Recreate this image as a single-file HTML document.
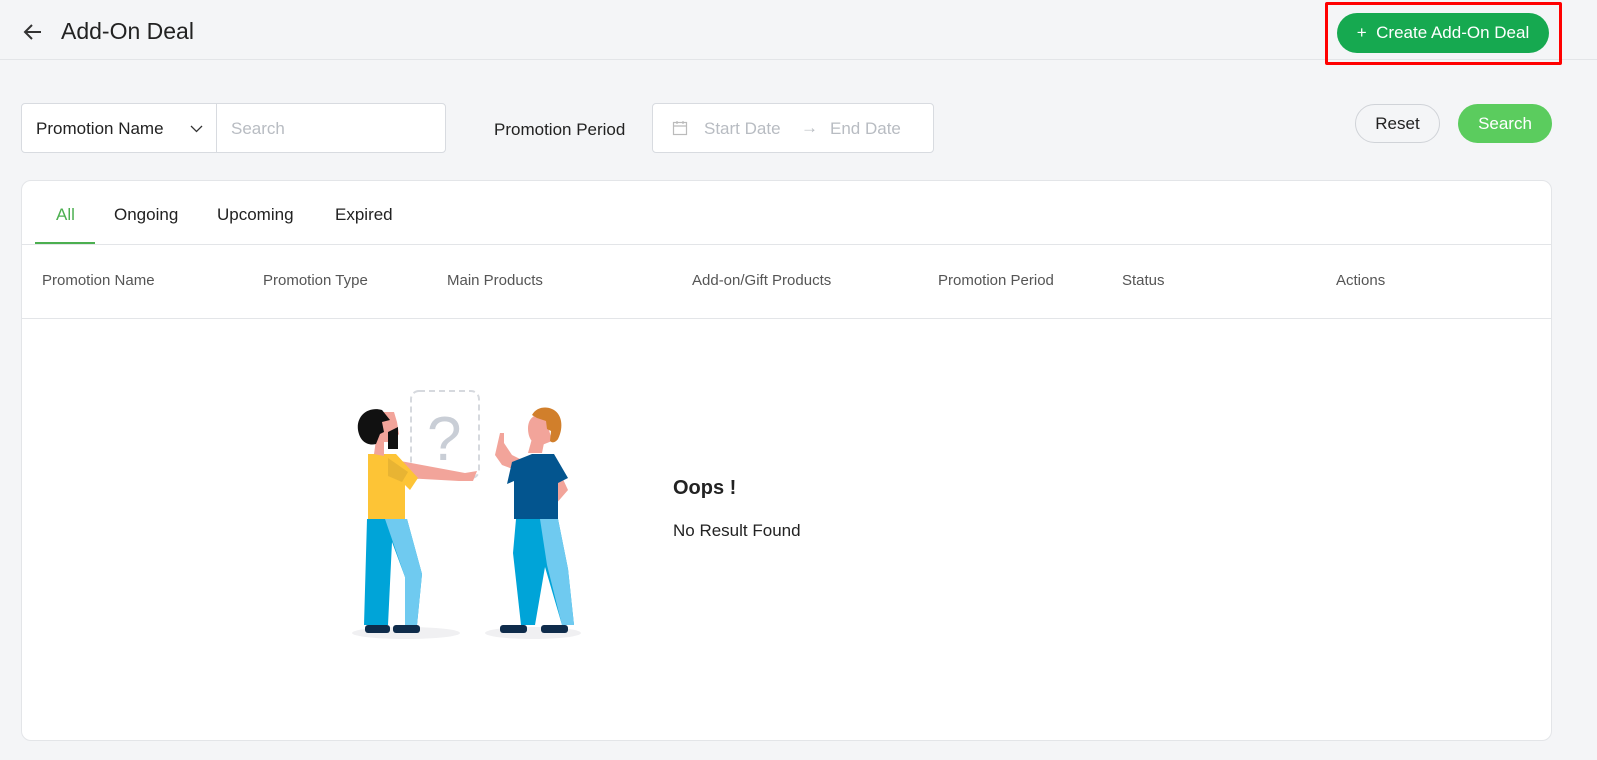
<!DOCTYPE html>
<html><head><meta charset="utf-8"><style>
*{box-sizing:border-box;margin:0;padding:0}
body{width:1597px;height:760px;background:#f4f5f7;font-family:"Liberation Sans",Arial,sans-serif;color:#222;position:relative;overflow:hidden}
.abs{position:absolute}
.hdr{left:0;top:0;width:1597px;height:60px;border-bottom:1px solid #e3e5e8}
.title{left:61px;top:18px;font-size:23px;color:#222}
.create{left:1337px;top:13px;width:212px;height:40px;border-radius:20px;background:#16a950;color:#fff;font-size:17px;line-height:40px;text-align:center}
.redbox{left:1325px;top:2px;width:237px;height:63px;border:3px solid #f00;border-radius:2px}
.box{background:#fff;border:1px solid #d8dbe0;border-radius:4px}
.txt{font-size:17px}
.ph{color:#b8bcc2;font-size:17px}
.card{left:21px;top:180px;width:1531px;height:561px;background:#fff;border:1px solid #e3e5e8;border-radius:10px}
.th{top:272px;font-size:15px;color:#555}
</style></head><body>
<div class="abs hdr"></div>
<svg class="abs" style="left:22px;top:21px" width="22" height="22" viewBox="0 0 22 22"><path d="M19 11H4M10 4l-7 7 7 7" stroke="#333" stroke-width="2" fill="none"/></svg>
<div class="abs title">Add-On Deal</div>
<div class="abs create">+&nbsp;&nbsp;Create Add-On Deal</div>
<div class="abs redbox"></div>

<div class="abs box" style="left:21px;top:103px;width:196px;height:50px;border-radius:4px 0 0 4px"></div>
<div class="abs txt" style="left:36px;top:119px">Promotion Name</div>
<svg class="abs" style="left:190px;top:125px" width="13" height="8"><path d="M1 1l5.5 5.5L12 1" stroke="#333" stroke-width="1.3" fill="none"/></svg>
<div class="abs box" style="left:216px;top:103px;width:230px;height:50px;border-radius:0 4px 4px 0"></div>
<div class="abs ph" style="left:231px;top:119px">Search</div>
<div class="abs txt" style="left:494px;top:120px">Promotion Period</div>
<div class="abs box" style="left:652px;top:103px;width:282px;height:50px"></div>
<svg class="abs" style="left:672px;top:120px" width="16" height="16"><rect x="1.5" y="2.5" width="13" height="12" fill="none" stroke="#bbb" stroke-width="1.2"/><path d="M1.5 6h13M5 1v3M11 1v3" stroke="#bbb" stroke-width="1.2"/></svg>
<div class="abs ph" style="left:704px;top:119px">Start Date</div>
<div class="abs ph" style="left:801px;top:118px">→</div>
<div class="abs ph" style="left:830px;top:119px">End Date</div>
<div class="abs" style="left:1355px;top:104px;width:85px;height:39px;border:1px solid #d0d3d8;border-radius:20px;background:#f4f5f7;text-align:center;line-height:37px;font-size:17px">Reset</div>
<div class="abs" style="left:1458px;top:104px;width:94px;height:39px;border-radius:20px;background:#5bcc5e;color:#fff;text-align:center;line-height:39px;font-size:17px">Search</div>

<div class="abs card"></div>
<div class="abs txt" style="left:56px;top:205px;color:#4caf50">All</div>
<div class="abs" style="left:35px;top:242px;width:60px;height:2px;background:#4caf50"></div>
<div class="abs txt" style="left:114px;top:205px">Ongoing</div>
<div class="abs txt" style="left:217px;top:205px">Upcoming</div>
<div class="abs txt" style="left:335px;top:205px">Expired</div>
<div class="abs" style="left:22px;top:244px;width:1529px;height:1px;background:#e3e5e8"></div>
<div class="abs th" style="left:42px">Promotion Name</div>
<div class="abs th" style="left:263px">Promotion Type</div>
<div class="abs th" style="left:447px">Main Products</div>
<div class="abs th" style="left:692px">Add-on/Gift Products</div>
<div class="abs th" style="left:938px">Promotion Period</div>
<div class="abs th" style="left:1122px">Status</div>
<div class="abs th" style="left:1336px">Actions</div>
<div class="abs" style="left:22px;top:318px;width:1529px;height:1px;background:#e3e5e8"></div>

<svg class="abs" style="left:340px;top:380px" width="260" height="270" viewBox="0 0 260 270">
<ellipse cx="66" cy="253" rx="54" ry="6" fill="#f0f0f2"/><ellipse cx="193" cy="253" rx="48" ry="6" fill="#f0f0f2"/>
<rect x="71" y="11" width="68" height="87" rx="8" fill="#fff" stroke="#d6d9de" stroke-width="2" stroke-dasharray="6 4"/>
<text x="87" y="80" font-size="62" fill="#c9ced6" font-family="Liberation Sans">?</text>
<!-- left man -->
<path d="M55 80l70 13 12-2 -4 10-14 0-72-4z" fill="#f2a49a"/>
<path d="M28 74h28l22 24-8 12 -5-5v35H28z" fill="#fdc436"/>
<path d="M48 78l20 14-6 10-14-6z" fill="#e8b433"/>
<path d="M27 139h40l15 55-5 51h-12l0-48-13-35-4 83H24z" fill="#00a4d8"/>
<path d="M45 139h22l15 55-5 51h-12l0-48z" fill="#6fcaf0"/>
<rect x="25" y="245" width="25" height="8" rx="3" fill="#0f2c4b"/><rect x="53" y="245" width="27" height="8" rx="3" fill="#0f2c4b"/>
<path d="M40 32h14l3 10 2 12-6 8h-9l0 14-10-2z" fill="#f2a49a"/>
<path d="M48 52l10-5 0 22-10 0z" fill="#111"/>
<path d="M42 30c-14-4-26 6-24 20 2 12 10 16 18 14l4-10 4-2-2-10 8-2z" fill="#111"/>
<!-- right man -->
<path d="M155 75l5-22 4 0 0 10 8 12 12 6-6 10-16-6z" fill="#f2a49a"/>
<path d="M215 82l13 28-13 15-5-6 8-8-8-20z" fill="#f2a49a"/>
<path d="M193 55l-5 18 14 0 2-10z" fill="#f2a49a"/>
<path d="M205 35c-9-3-17 3-17 13 0 10 4 17 14 17l10-4z" fill="#f2a49a"/>
<path d="M192 35c4-8 14-9 20-6 10 4 12 18 6 30-3 4-6 4-8 2l1-10-4-2 -1-8-9-3z" fill="#d17f2b"/>
<path d="M172 82l20-8h22l14 24-10 5v36h-44l0-38-7 3z" fill="#03558f"/>
<path d="M176 139h42l10 50 6 56h-12l-17-58-10 58h-14l-8-72z" fill="#00a4d8"/>
<path d="M200 139h18l10 50 6 56h-12l-15-60z" fill="#6fcaf0"/>
<rect x="160" y="245" width="27" height="8" rx="3" fill="#0f2c4b"/><rect x="201" y="245" width="27" height="8" rx="3" fill="#0f2c4b"/>
</svg>

<div class="abs" style="left:673px;top:477px;font-size:20px;font-weight:bold;color:#222">Oops !</div>
<div class="abs txt" style="left:673px;top:521px">No Result Found</div>
</body></html>
